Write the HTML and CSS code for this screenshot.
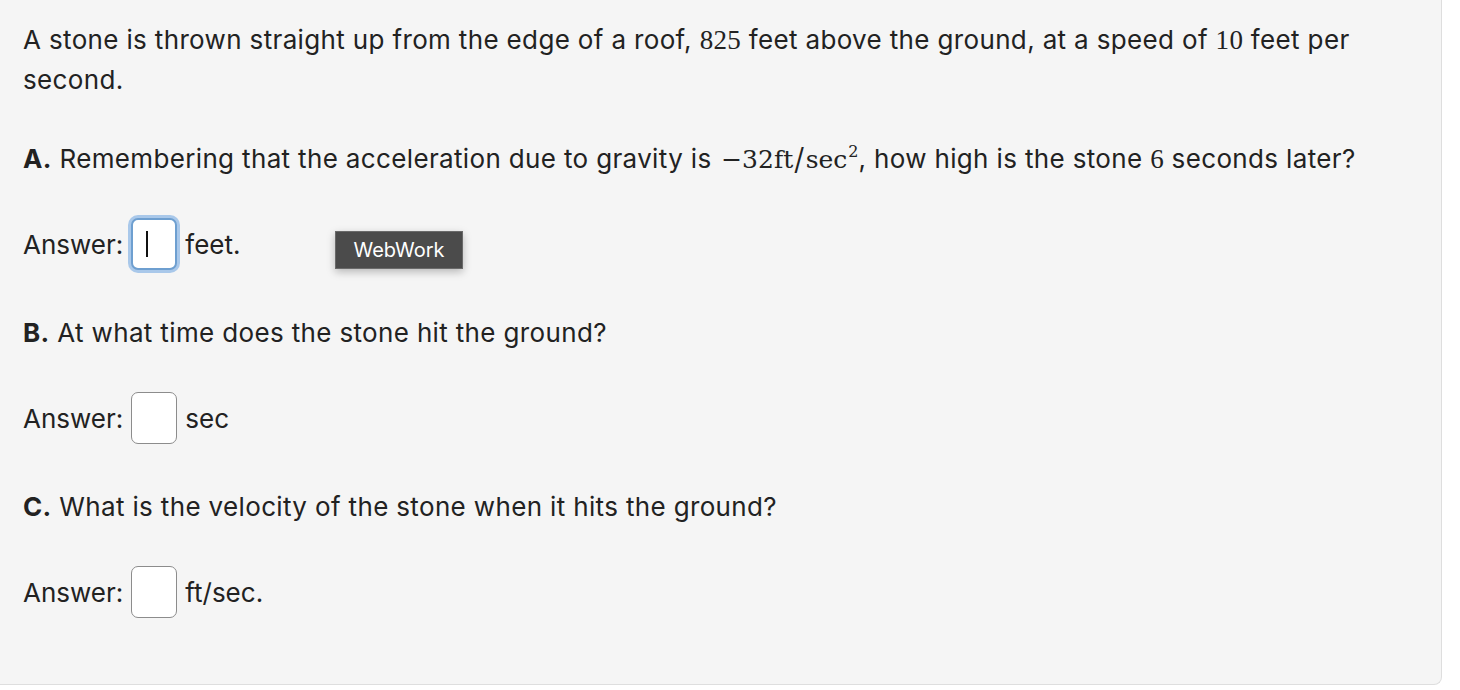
FILE: index.html
```html
<!DOCTYPE html>
<html>
<head>
<meta charset="utf-8">
<link rel="stylesheet" href="styles.css">
</head>
<body>
<div class="panel">
  <p class="para intro">A stone is thrown straight up from the edge of a roof, <span class="m">825</span> feet above the ground, at a speed of <span class="m">10</span> feet per second.</p>
  <p class="para q">
    <b>A.</b> Remembering that the acceleration due to gravity is <span class="mx">&minus;32ft<span class="sl">/</span>sec<sup>2</sup></span>, how high is the stone <span class="m">6</span> seconds later?
  </p>
  <div class="answer first">
    <span>Answer:</span>
    <span class="box focus"><span class="caret"></span></span>
    <span>feet.</span>
    <span class="tip">WebWork</span>
  </div>
  <p class="para q"><b>B.</b> At what time does the stone hit the ground?</p>
  <div class="answer">
    <span>Answer:</span>
    <span class="box"></span>
    <span>sec</span>
  </div>
  <p class="para q"><b>C.</b> What is the velocity of the stone when it hits the ground?</p>
  <div class="answer">
    <span>Answer:</span>
    <span class="box"></span>
    <span>ft/sec.</span>
  </div>
</div>
</body>
</html>
```
FILE: styles.css
```css
html, body {
  margin: 0;
  padding: 0;
  background: #ffffff;
}
body {
  font-family: Inter, "Noto Sans", sans-serif;
  font-size: 26px;
  color: #222222;
}
.panel {
  width: 1442px;
  box-sizing: border-box;
  height: 685px;
  background: #f5f5f5;
  border-right: 1px solid #dedede;
  border-bottom: 1px solid #dedede;
  border-bottom-right-radius: 8px;
  padding: 20px 20px 0 23px;
  display: flex;
  flex-direction: column;
}
.para {
  margin: 0;
  line-height: 40px;
  letter-spacing: 0.35px;
}
.intro {
  margin-bottom: 39px;
}
.m {
  font-family: "Liberation Serif", "DejaVu Serif", serif;
  font-size: 27px;
  letter-spacing: 0.3px;
}
.mx {
  font-family: "DejaVu Serif", "Liberation Serif", serif;
  font-size: 25px;
  margin-left: 2px;
  letter-spacing: 0;
}
.sl {
  display: inline-block;
  padding: 0 2px;
  transform: scale(1.1, 1.25);
}
.mx sup {
  font-size: 16px;
  line-height: 0;
  vertical-align: 11px;
  margin-left: 1px;
}
.answer {
  position: relative;
  display: flex;
  align-items: center;
  height: 56px;
  gap: 8px;
  margin-top: 37px;
  margin-bottom: 41px;
}
.answer.first {
  margin-top: 36px;
}
.box {
  box-sizing: border-box;
  width: 46px;
  height: 52px;
  background: #ffffff;
  border: 1.5px solid #8c8c8c;
  border-radius: 7px;
  display: flex;
  align-items: center;
  padding-left: 13px;
}
.box.focus {
  border: 2px solid #6e9fd0;
  box-shadow: 0 0 0 3px #a9c8ea;
}
.caret {
  width: 2px;
  height: 26px;
  background: #111111;
}
.tip {
  position: absolute;
  left: 312px;
  top: 15px;
  width: 128px;
  height: 38px;
  box-sizing: border-box;
  background: #4b4b4b;
  border: 1px solid #6a6a6a;
  color: #ffffff;
  font-size: 20px;
  display: flex;
  align-items: center;
  justify-content: center;
  box-shadow: 0 3px 8px rgba(0,0,0,0.25);
}
```
